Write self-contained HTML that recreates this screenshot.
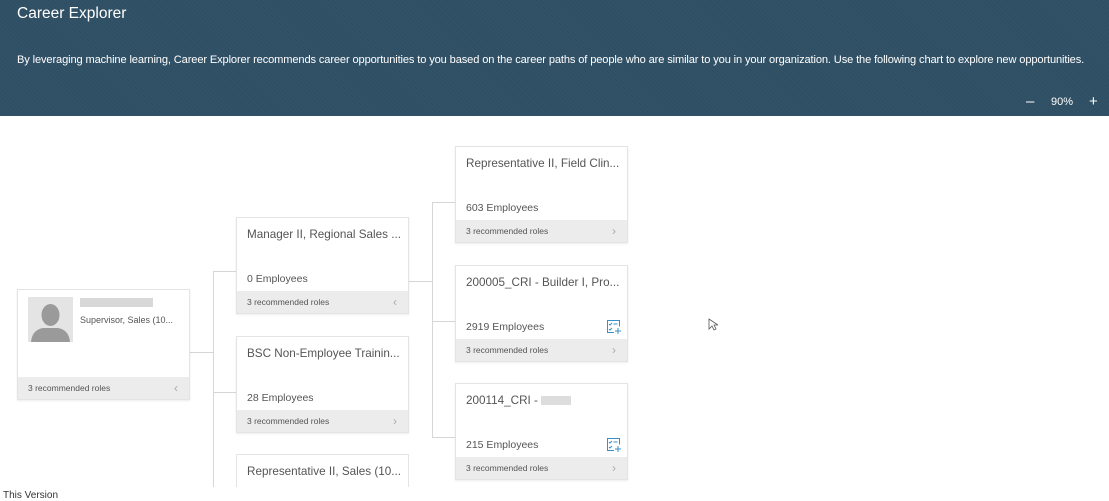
<!DOCTYPE html>
<html><head><meta charset="utf-8"><style>
*{box-sizing:border-box;margin:0;padding:0}
body{width:1109px;height:498px;overflow:hidden;background:#fff;font-family:"Liberation Sans",Arial,sans-serif;position:relative}
.hdr{position:absolute;left:0;top:0;width:1109px;height:116px;background:#2f4f64;background-image:repeating-linear-gradient(45deg,rgba(255,255,255,.025) 0 1px,transparent 1px 3px);color:#fff}
.hdr h1{position:absolute;left:17px;top:5px;font-size:15.5px;font-weight:normal}
.hdr p{position:absolute;left:17px;top:54px;font-size:11.1px;letter-spacing:-0.13px;white-space:nowrap}
.zm{position:absolute;left:1024px;top:96px;font-size:11px;width:80px}
.card{position:absolute;width:173px;height:97px;background:#fff;border:1px solid #e4e4e4;box-shadow:0 1px 2px rgba(0,0,0,.08);color:#555}
.card .t{position:absolute;left:10px;top:10px;font-size:11.7px;white-space:nowrap}
.card .e{position:absolute;left:10px;top:55px;font-size:10.5px}
.card .f{position:absolute;left:0;right:0;bottom:0;height:22px;background:#ececec;font-size:8.5px;line-height:22px;padding-left:10px;color:#555}
.card .f span{position:absolute;right:11px;top:0;font-size:12px;color:#aaa}
.ln{position:absolute;background:#d6d6d6}
.ic{position:absolute;right:5px;top:53px}
</style></head><body>
<div class="hdr"><h1>Career Explorer</h1>
<p>By leveraging machine learning, Career Explorer recommends career opportunities to you based on the career paths of people who are similar to you in your organization. Use the following chart to explore new opportunities.</p>
<div class="zm"><span style="position:absolute;left:2px;top:-3px;font-size:15px">–</span><span style="position:absolute;left:27px">90%</span><span style="position:absolute;left:65px;top:-3px;font-size:15px">+</span></div></div>

<div class="ln" style="left:189px;top:352px;width:24px;height:1px"></div>
<div class="ln" style="left:213px;top:271px;width:1px;height:216px"></div>
<div class="ln" style="left:213px;top:271px;width:23px;height:1px"></div>
<div class="ln" style="left:213px;top:392px;width:23px;height:1px"></div>
<div class="ln" style="left:408px;top:281px;width:24px;height:1px"></div>
<div class="ln" style="left:432px;top:202px;width:1px;height:236px"></div>
<div class="ln" style="left:432px;top:202px;width:23px;height:1px"></div>
<div class="ln" style="left:432px;top:321px;width:23px;height:1px"></div>
<div class="ln" style="left:432px;top:437px;width:23px;height:1px"></div>

<div class="card" style="left:17px;top:289px;height:111px">
<div style="position:absolute;left:10px;top:7px;width:45px;height:45px;background:#e4e4e4;overflow:hidden">
<svg width="45" height="45" viewBox="0 0 45 45"><ellipse cx="22.5" cy="18" rx="9" ry="11" fill="#9a9a9a"/><path d="M3 45 Q4 33 15 31 L30 31 Q41 33 42 45Z" fill="#9a9a9a"/></svg></div>
<div style="position:absolute;left:62px;top:8px;width:73px;height:9px;background:#d8d8d8"></div>
<div style="position:absolute;left:62px;top:25px;font-size:9px">Supervisor, Sales (10...</div>
<div class="f">3 recommended roles<span>‹</span></div></div>

<div class="card" style="left:236px;top:217px"><div class="t">Manager II, Regional Sales ...</div><div class="e">0 Employees</div><div class="f">3 recommended roles<span>‹</span></div></div>
<div class="card" style="left:236px;top:336px"><div class="t">BSC Non-Employee Trainin...</div><div class="e">28 Employees</div><div class="f">3 recommended roles<span>›</span></div></div>
<div class="card" style="left:236px;top:454px;height:33px;border-bottom:none;box-shadow:none"><div class="t">Representative II, Sales (10...</div></div>

<div class="card" style="left:455px;top:146px"><div class="t">Representative II, Field Clin...</div><div class="e">603 Employees</div><div class="f">3 recommended roles<span>›</span></div></div>
<div class="card" style="left:455px;top:265px"><div class="t">200005_CRI - Builder I, Pro...</div><div class="e">2919 Employees</div>
<svg class="ic" width="16" height="16" viewBox="0 0 16 16"><path d="M11 1.5H1.5v12H8" fill="none" stroke="#3a8fc8" stroke-width="1"/><path d="M11 1.5h2.5v6" fill="none" stroke="#3a8fc8" stroke-width="1"/><path d="M3 5l1 1 2-2M7.5 5h4M3 10l1 1 2-2M12 9v6M9 12h6" stroke="#3a8fc8" stroke-width="1" fill="none"/></svg>
<div class="f">3 recommended roles<span>›</span></div></div>
<div class="card" style="left:455px;top:383px"><div class="t">200114_CRI - <span style="display:inline-block;width:30px;height:9px;background:#ddd;vertical-align:middle"></span></div><div class="e">215 Employees</div>
<svg class="ic" width="16" height="16" viewBox="0 0 16 16"><path d="M11 1.5H1.5v12H8" fill="none" stroke="#3a8fc8" stroke-width="1"/><path d="M11 1.5h2.5v6" fill="none" stroke="#3a8fc8" stroke-width="1"/><path d="M3 5l1 1 2-2M7.5 5h4M3 10l1 1 2-2M12 9v6M9 12h6" stroke="#3a8fc8" stroke-width="1" fill="none"/></svg>
<div class="f">3 recommended roles<span>›</span></div></div>

<svg style="position:absolute;left:708px;top:318px" width="10" height="14" viewBox="0 0 10 14"><path d="M1 1v10l3-3 2 4 2-1-2-4h4z" fill="#fff" stroke="#555" stroke-width="0.8"/></svg>
<div style="position:absolute;left:3px;top:490px;font-size:10px;color:#333">This Version</div>
</body></html>
